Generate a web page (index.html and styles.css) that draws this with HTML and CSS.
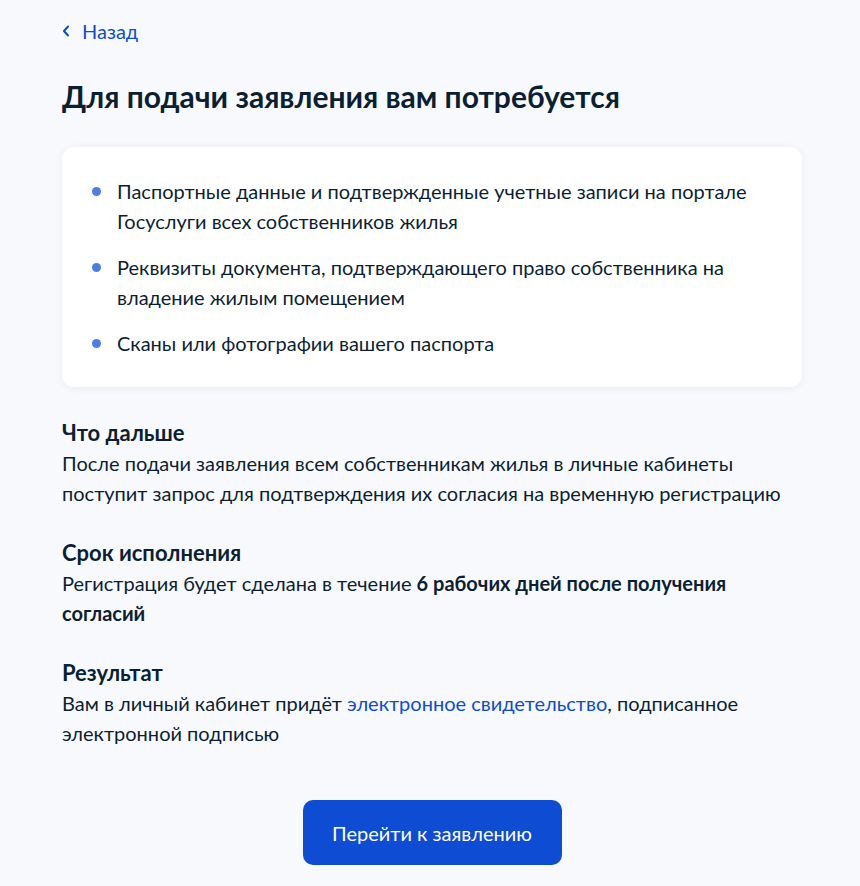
FILE: index.html
```html
<!DOCTYPE html>
<html lang="ru">
<head>
<meta charset="utf-8">
<link rel="stylesheet" href="styles.css">
</head>
<body>
<div class="page">
  <a class="back" href="#"><svg class="back-icon" width="8" height="12" viewBox="0 0 8 12"><path d="M6 1.5L2 6l4 4.5" fill="none" stroke="#0d4cd3" stroke-width="2" stroke-linecap="round" stroke-linejoin="round"/></svg><span>Назад</span></a>
  <h1 class="title">Для подачи заявления вам потребуется</h1>
  <div class="card">
    <ul class="list">
      <li>Паспортные данные и подтвержденные учетные записи на портале Госуслуги всех собственников жилья</li>
      <li>Реквизиты документа, подтверждающего право собственника на владение жилым помещением</li>
      <li>Сканы или фотографии вашего паспорта</li>
    </ul>
  </div>
  <div class="section">
    <h2 class="section-title">Что дальше</h2>
    <p class="section-text">После подачи заявления всем собственникам жилья в личные кабинеты поступит запрос для подтверждения их согласия на временную регистрацию</p>
  </div>
  <div class="section">
    <h2 class="section-title">Срок исполнения</h2>
    <p class="section-text">Регистрация будет сделана в течение <b>6 рабочих дней после получения согласий</b></p>
  </div>
  <div class="section">
    <h2 class="section-title">Результат</h2>
    <p class="section-text">Вам в личный кабинет придёт <a class="link" href="#">электронное свидетельство</a>, подписанное электронной подписью</p>
  </div>
  <div class="actions">
    <button class="btn">Перейти к заявлению</button>
  </div>
</div>
</body>
</html>
```
FILE: styles.css
```css
html, body {
  margin: 0;
  padding: 0;
  background: #f8f9fd;
}
body {
  font-family: Lato, "Noto Sans", sans-serif;
  color: #0b1f33;
}
.page {
  width: 740px;
  padding: 16px 0 0 62px;
}
.back {
  display: inline-flex;
  align-items: center;
  gap: 12px;
  color: #0d4cd3;
  text-decoration: none;
  font-size: 20px;
  line-height: 30px;
}
.back-icon {
  display: block;
}
.title {
  margin: 31px 0 0;
  font-size: 30px;
  line-height: 38px;
  font-weight: 700;
}
.card {
  margin-top: 32px;
  background: #fff;
  border-radius: 12px;
  box-shadow: 0 1px 8px rgba(11, 31, 51, 0.06);
  padding: 29px 32px 29px 30px;
}
.list {
  list-style: none;
  margin: 0;
  padding: 0;
  display: flex;
  flex-direction: column;
  gap: 16px;
}
.list li {
  position: relative;
  padding-left: 25px;
  font-size: 20px;
  line-height: 30px;
}
.list li::before {
  content: "";
  position: absolute;
  left: 0;
  top: 11px;
  width: 9px;
  height: 9px;
  border-radius: 50%;
  background: #4b7ce8;
}
.section {
  margin-top: 31px;
}
.section + .section {
  margin-top: 30px;
}
.section-title {
  margin: 0;
  font-size: 22px;
  line-height: 30px;
  font-weight: 700;
}
.section-text {
  margin: 0;
  font-size: 20px;
  line-height: 30px;
}
.section-text b {
  font-weight: 700;
}
.link {
  color: #0d4cd3;
  text-decoration: none;
}
.actions {
  display: flex;
  justify-content: center;
  margin-top: 52px;
}
.btn {
  width: 259px;
  height: 65px;
  border: none;
  border-radius: 10px;
  background: #0d4cd3;
  color: #fff;
  font-family: Lato, "Noto Sans", sans-serif;
  font-size: 20px;
}
```
